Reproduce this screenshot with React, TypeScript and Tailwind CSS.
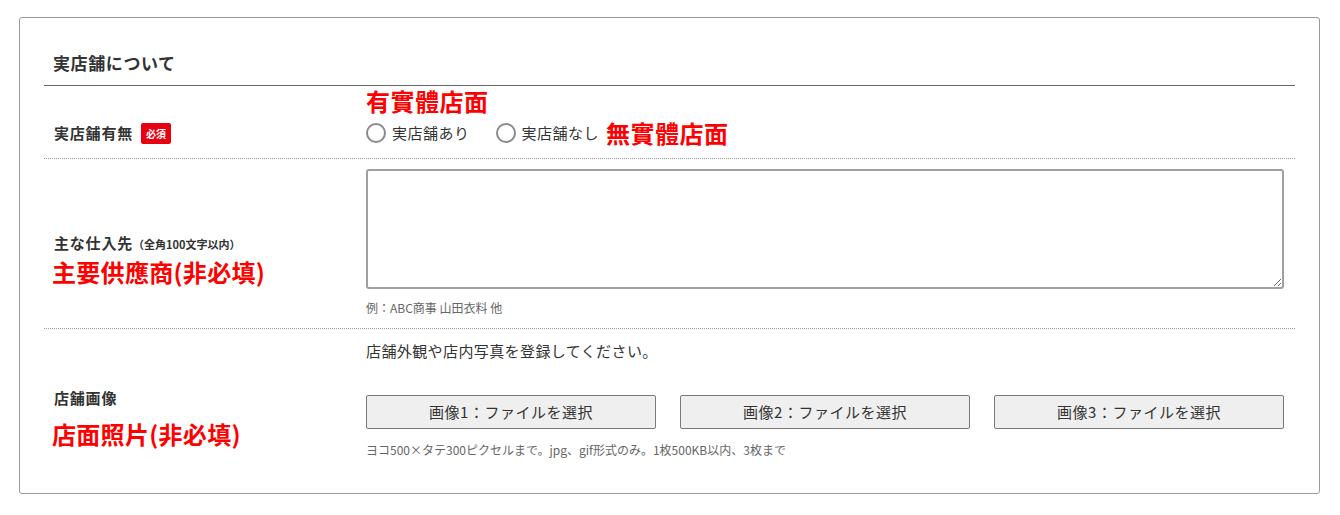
import React from "react";

const font = { fontFamily: '"Noto Sans CJK JP", "Noto Sans", sans-serif' };

function Radio({ label }: { label: string }) {
  return (
    <label className="flex items-center gap-[6px]">
      <span className="block w-[20px] h-[20px] rounded-full border-2 border-[#8a8a8a] bg-white" />
      <span className="text-[15px] text-[#333] tracking-[0.5px]">{label}</span>
    </label>
  );
}

export default function App() {
  return (
    <div className="bg-white w-[1340px] h-[515px] pt-[17px] pl-[19px]" style={font}>
      <div className="w-[1301px] h-[477px] border border-[#9a9a9a] rounded-[3px] px-[24px]">
        {/* heading */}
        <div className="pt-[35px] pb-[12px] pl-[9px] border-b border-[#666]">
          <h2 className="text-[17px] leading-[20px] font-bold text-[#333] tracking-[0.6px]">実店舗について</h2>
        </div>

        {/* row 1 */}
        <div className="flex border-b border-dotted border-[#999]">
          <div className="w-[322px] pl-[10px] pt-[37px]">
            <div className="flex items-center gap-[8px] h-[20px]">
              <span className="text-[15px] font-bold text-[#333] tracking-[0.8px]">実店舗有無</span>
              <span className="bg-[#e60012] text-white text-[10px] font-bold leading-[21px] px-[5px] rounded-[2px]">必須</span>
            </div>
          </div>
          <div className="flex-1 pt-[3px] pb-[10px]">
            <div className="text-[24px] leading-[24px] font-bold text-[#ff0000] tracking-[0.5px]">有實體店面</div>
            <div className="mt-[5px] h-[30px] flex items-center">
              <Radio label="実店舗あり" />
              <div className="ml-[26px]">
                <Radio label="実店舗なし" />
              </div>
              <span className="ml-[7px] text-[24px] font-bold text-[#ff0000] tracking-[0.5px]">無實體店面</span>
            </div>
          </div>
        </div>

        {/* row 2 */}
        <div className="flex border-b border-dotted border-[#999]">
          <div className="w-[322px] pl-[10px] pt-[73px]">
            <div className="h-[20px] flex items-baseline">
              <span className="text-[15px] font-bold text-[#333] tracking-[0.8px]">主な仕入先</span>
              <span className="text-[11px] font-bold text-[#333]">（全角100文字以内）</span>
            </div>
            <div className="-ml-[2px] mt-[5px] text-[24px] leading-[30px] font-bold text-[#ff0000] tracking-[0.3px]">主要供應商(非必填)</div>
          </div>
          <div className="flex-1 pt-[10px] pb-[12px] pr-[11px]">
            <textarea className="block w-full h-[120px] border-2 border-[#a0a0a0] rounded-[3px] bg-white" />
            <p className="mt-[11px] text-[12px] leading-[16px] text-[#666]">例：ABC商事 山田衣料 他</p>
          </div>
        </div>

        {/* row 3 */}
        <div className="flex">
          <div className="w-[322px] pl-[10px] pt-[59px]">
            <div className="text-[15px] leading-[20px] font-bold text-[#333] tracking-[0.8px]">店舗画像</div>
            <div className="-ml-[2px] mt-[11px] text-[24px] leading-[30px] font-bold text-[#ff0000] tracking-[0.3px]">店面照片(非必填)</div>
          </div>
          <div className="flex-1 pt-[11px] pr-[11px]">
            <p className="text-[15px] leading-[22px] text-[#333] tracking-[0.4px]">店舗外観や店内写真を登録してください。</p>
            <div className="mt-[33px] grid grid-cols-3 gap-[24px]">
              {[1, 2, 3].map((n) => (
                <button
                  key={n}
                  className="h-[34px] bg-[#efefef] border border-[#7a7a7a] rounded-[2px] text-[15px] text-[#333] tracking-[0.5px]"
                >
                  {`画像${n}：ファイルを選択`}
                </button>
              ))}
            </div>
            <p className="mt-[13px] text-[12px] leading-[16px] text-[#666]">
              ヨコ500×タテ300ピクセルまで。jpg、gif形式のみ。1枚500KB以内、3枚まで
            </p>
          </div>
        </div>
      </div>
    </div>
  );
}
